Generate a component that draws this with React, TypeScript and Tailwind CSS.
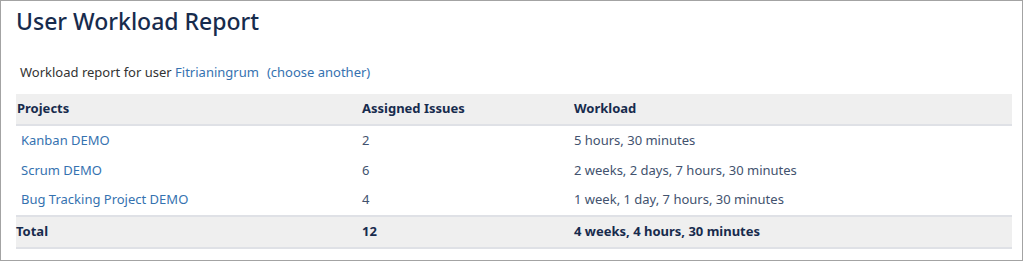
const rows = [
  { project: "Kanban DEMO", issues: "2", workload: "5 hours, 30 minutes" },
  { project: "Scrum DEMO", issues: "6", workload: "2 weeks, 2 days, 7 hours, 30 minutes" },
  { project: "Bug Tracking Project DEMO", issues: "4", workload: "1 week, 1 day, 7 hours, 30 minutes" },
]

export default function App() {
  return (
    <div className="h-[261px] w-[1023px] border border-[#a3a3a3] bg-white font-['Noto_Sans',sans-serif] text-[#42526e]">
      <div className="pl-[15px] pr-[10px]">
        <h1 className="pt-[5px] text-[23px] font-medium leading-[30px] text-[#172b4d]">User Workload Report</h1>

        <p className="mt-[27px] pl-[4px] text-[13px] leading-[18px] text-[#333]">
          Workload report for user <a className="text-[#3572b0]">Fitrianingrum</a>
          <span className="ml-[8px] text-[#3572b0]">(choose another)</span>
        </p>

        <div className="mt-[13px] text-[13px]">
          <div className="grid h-[32px] grid-cols-[346px_212px_1fr] items-center border-b-2 border-[#dfe1e6] bg-[#efefef] font-bold text-[#172b4d]">
            <div className="pl-[1px]">Projects</div>
            <div>Assigned Issues</div>
            <div>Workload</div>
          </div>
          {rows.map((r) => (
            <div key={r.project} className="grid h-[29.5px] grid-cols-[346px_212px_1fr] items-center">
              <div className="pl-[5px] text-[#3572b0]">{r.project}</div>
              <div>{r.issues}</div>
              <div>{r.workload}</div>
            </div>
          ))}
          <div className="grid h-[34px] grid-cols-[346px_212px_1fr] items-center border-y-2 border-[#dfe1e6] bg-[#efefef] pt-[1px] font-bold text-[#172b4d]">
            <div>Total</div>
            <div>12</div>
            <div>4 weeks, 4 hours, 30 minutes</div>
          </div>
        </div>
      </div>
    </div>
  )
}
